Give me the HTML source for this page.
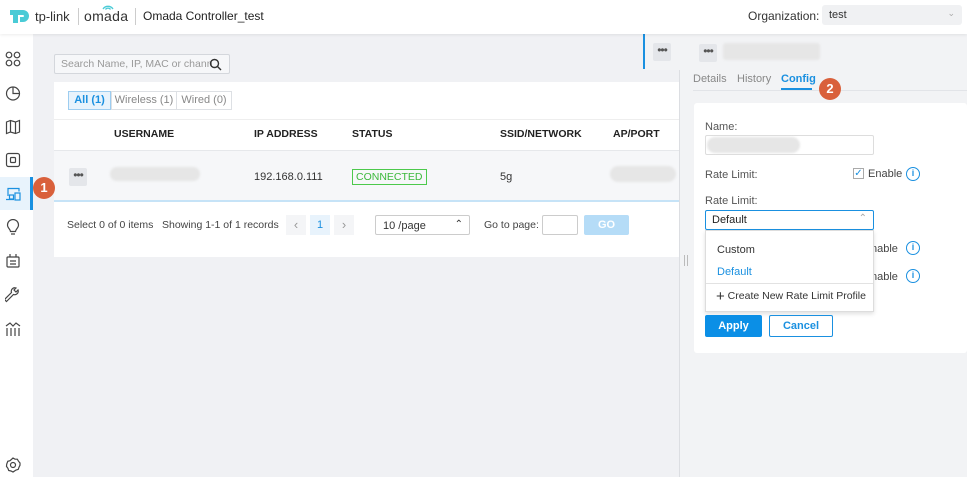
<!DOCTYPE html>
<html><head><meta charset="utf-8"><style>
*{box-sizing:border-box;margin:0;padding:0}
body{width:967px;height:477px;overflow:hidden;background:#f0f1f4;font-family:"Liberation Sans",Arial,sans-serif;font-size:11px;color:#333;position:relative}
.abs{position:absolute}
.hdr{left:0;top:0;width:967px;height:34px;background:#fff;box-shadow:0 1px 3px rgba(0,0,0,.08);z-index:5}
.side{left:0;top:34px;width:33px;height:443px;background:#fff}
.ic{position:absolute;left:5px;width:16px;height:16px}
.blur{background:#e6e6e6;border-radius:8px;filter:blur(1px)}
.th{font-weight:bold;font-size:10.5px;color:#222;top:128px}
.dots{width:18px;height:18px;background:#e4e6ea;border-radius:2px;color:#555;font-size:12px;text-align:center;line-height:14px;letter-spacing:-1px}
.badge{width:22px;height:22px;border-radius:50%;background:#d9603b;color:#fff;font-weight:bold;font-size:13px;text-align:center;line-height:22px}
.info{width:14px;height:14px;border:1.3px solid #1a90e0;border-radius:50%;color:#1a90e0;font-size:9px;text-align:center;line-height:11px;font-weight:bold}
</style></head><body>
<div class="abs hdr">
 <svg class="abs" style="left:7px;top:6px" width="26" height="22" viewBox="0 0 26 22"><path d="M3 4h8v13h-5v-8h-3z" fill="#4acbd6"/><path d="M10 4h6a6 6 0 0 1 0 12h-3v-5h3a1 1 0 0 0 0-2h-6z" fill="#4acbd6"/></svg>
 <div class="abs" style="left:35px;top:9px;font-size:13px;color:#333">tp-link</div>
 <div class="abs" style="left:78px;top:8px;width:1px;height:17px;background:#ccc"></div>
 <div class="abs" style="left:84px;top:8px;font-size:14px;color:#333;letter-spacing:.3px">omada</div>
 <svg class="abs" style="left:101px;top:3px" width="14" height="7" viewBox="0 0 14 7"><path d="M2 6a6 6 0 0 1 10 0M4.5 6.5a3 3 0 0 1 5 0" stroke="#4acbd6" stroke-width="1.3" fill="none"/></svg>
 <div class="abs" style="left:135px;top:8px;width:1px;height:17px;background:#ccc"></div>
 <div class="abs" style="left:143px;top:9px;font-size:12px;color:#222">Omada Controller_test</div>
 <div class="abs" style="left:748px;top:9px;font-size:12px;color:#333">Organization:</div>
 <div class="abs" style="left:822px;top:5px;width:140px;height:20px;background:#f0f1f3;border-radius:3px"><span class="abs" style="left:7px;top:4px;font-size:11px">test</span><span class="abs" style="right:7px;top:3px;color:#aaa;font-size:9px">&#8964;</span></div>
</div>
<div class="abs side">
 <div class="abs" style="left:0;top:143px;width:33px;height:33px;background:#e8f3fc"></div>
 <div class="abs" style="left:30px;top:143px;width:3px;height:33px;background:#1a90e0"></div>
 <svg class="ic" style="top:17px" viewBox="0 0 16 16" fill="none" stroke="#444" stroke-width="1.2"><circle cx="4" cy="4" r="2.8"/><circle cx="12" cy="4" r="2.8"/><circle cx="4" cy="12" r="2.8"/><circle cx="12" cy="12" r="2.8"/></svg>
 <svg class="ic" style="top:51px" viewBox="0 0 16 16" fill="none" stroke="#444" stroke-width="1.2"><circle cx="8" cy="8.5" r="6.5"/><path d="M8 2v6.5h6.5"/></svg>
 <svg class="ic" style="top:85px" viewBox="0 0 16 16" fill="none" stroke="#444" stroke-width="1.2"><path d="M1.5 3l4-1.5 5 1.5 4-1.5v11.5l-4 1.5-5-1.5-4 1.5zM5.5 1.5v11.5M10.5 3v11.5"/></svg>
 <svg class="ic" style="top:118px" viewBox="0 0 16 16" fill="none" stroke="#444" stroke-width="1.2"><rect x="1.5" y="1.5" width="13" height="13" rx="2"/><rect x="5.5" y="5.5" width="5" height="5" rx="1"/></svg>
 <svg class="ic" style="top:152px" viewBox="0 0 16 16" fill="none" stroke="#1a90e0" stroke-width="1.2"><path d="M3 10V2.5h11v3M1 13.5h8"/><rect x="10" y="7" width="5" height="7"/><rect x="4.5" y="9" width="4" height="4"/></svg>
 <svg class="ic" style="top:185px" viewBox="0 0 16 16" fill="none" stroke="#444" stroke-width="1.2"><path d="M5.5 12.5c0-2-3-3.5-3-6.5a5.5 5.5 0 0 1 11 0c0 3-3 4.5-3 6.5zM6 15h4"/></svg>
 <svg class="ic" style="top:219px" viewBox="0 0 16 16" fill="none" stroke="#444" stroke-width="1.2"><rect x="2" y="4" width="12" height="10" rx="1"/><path d="M5 4V1M11 4V1M5 8h6M5 11h6"/></svg>
 <svg class="ic" style="top:253px" viewBox="0 0 16 16" fill="none" stroke="#444" stroke-width="1.2"><path d="M1.5 14.5l7-7a3.5 3.5 0 0 0 4.5-4.5l-2 2-2-2 2-2a3.5 3.5 0 0 0-4.5 4.5l-7 7z"/></svg>
 <svg class="ic" style="top:287px" viewBox="0 0 16 16" fill="none" stroke="#444" stroke-width="1.2"><path d="M2 15V7M6 15V7M10 15V7M14 15V7M1 5l4-3 3 3 3-3 4 3"/></svg>
 <svg class="ic" style="top:423px" viewBox="0 0 16 16" fill="none" stroke="#444" stroke-width="1.2"><path d="M8 1l2 1.2h2.3l1.2 2 1.5 1.8v2.2l-1 2 -.8 2.2-2.2.6L8 15l-2-1-2.3-.5-.8-2.2-1.4-1.9.2-2.3L2.8 4.3l2.2-.6z"/><circle cx="8" cy="8" r="2.5"/></svg>
</div>
<div class="abs" style="left:54px;top:54px;width:176px;height:20px;border:1px solid #d4d7dc;background:#f6f7f9;border-radius:2px"><span class="abs" style="left:6px;top:3px;color:#999;font-size:10.5px;white-space:nowrap">Search Name, IP, MAC or chann</span><svg class="abs" style="left:154px;top:3px" width="13" height="13" viewBox="0 0 13 13" fill="none" stroke="#333" stroke-width="1.4"><circle cx="5.5" cy="5.5" r="4"/><path d="M8.5 8.5l3.5 3.5"/></svg></div>
<div class="abs" style="left:54px;top:82px;width:626px;height:175px;background:#fff">
 <div class="abs" style="left:14px;top:9px;width:43px;height:19px;border:1px solid #9dcdf0;background:#e8f3fc;color:#1a90e0;font-weight:bold;text-align:center;line-height:17px">All (1)</div>
 <div class="abs" style="left:57px;top:9px;width:66px;height:19px;border:1px solid #dde0e4;color:#888;text-align:center;line-height:17px">Wireless (1)</div>
 <div class="abs" style="left:122px;top:9px;width:56px;height:19px;border:1px solid #dde0e4;color:#888;text-align:center;line-height:17px">Wired (0)</div>
 <div class="abs" style="left:0;top:37px;width:626px;height:1px;background:#eee"></div>
 <div class="abs" style="left:0;top:68px;width:626px;height:52px;background:#f6f7f9;border-top:1px solid #e6e8eb;border-bottom:2px solid #c6e3f7"></div>
</div>
<div class="abs th" style="left:114px">USERNAME</div>
<div class="abs th" style="left:254px">IP ADDRESS</div>
<div class="abs th" style="left:352px">STATUS</div>
<div class="abs th" style="left:500px">SSID/NETWORK</div>
<div class="abs th" style="left:613px">AP/PORT</div>
<div class="abs dots" style="left:69px;top:168px">•••</div>
<div class="abs blur" style="left:110px;top:167px;width:90px;height:14px"></div>
<div class="abs" style="left:254px;top:171px">192.168.0.111</div>
<div class="abs" style="left:352px;top:169px;border:1px solid #4cc94c;color:#3bb83b;padding:1px 3px;font-size:10.5px">CONNECTED</div>
<div class="abs" style="left:500px;top:171px">5g</div>
<div class="abs blur" style="left:610px;top:166px;width:66px;height:16px"></div>
<div class="abs" style="left:67px;top:219px;color:#444;font-size:10.5px">Select 0 of 0 items</div>
<div class="abs" style="left:162px;top:219px;color:#444;font-size:10.5px">Showing 1-1 of 1 records</div>
<div class="abs" style="left:286px;top:215px;width:20px;height:20px;background:#f4f5f7;color:#999;text-align:center;line-height:19px;font-size:13px">&#8249;</div>
<div class="abs" style="left:310px;top:215px;width:20px;height:20px;background:#e8f3fc;color:#1a90e0;text-align:center;line-height:20px">1</div>
<div class="abs" style="left:334px;top:215px;width:20px;height:20px;background:#f4f5f7;color:#999;text-align:center;line-height:19px;font-size:13px">&#8250;</div>
<div class="abs" style="left:375px;top:215px;width:95px;height:20px;border:1px solid #ccc;border-radius:2px"><span class="abs" style="left:7px;top:4px">10 /page</span><span class="abs" style="right:6px;top:3px;font-size:10px">&#8963;</span></div>
<div class="abs" style="left:484px;top:219px;color:#444;font-size:10.5px">Go to page:</div>
<div class="abs" style="left:542px;top:215px;width:36px;height:20px;border:1px solid #ccc;border-radius:2px"></div>
<div class="abs" style="left:584px;top:215px;width:45px;height:20px;background:#b5dcf7;color:#fff;font-weight:bold;text-align:center;line-height:20px;border-radius:2px">GO</div>
<div class="abs" style="left:643px;top:34px;width:324px;height:36px;background:#f2f3f5"></div>
<div class="abs" style="left:643px;top:34px;width:2px;height:35px;background:#1a90e0"></div>
<div class="abs" style="left:679px;top:70px;width:288px;height:407px;background:#f2f3f5;border-left:1px solid #dcdee2"></div>
<div class="abs" style="left:684px;top:255px;width:4px;height:11px;border-left:1px solid #bbb;border-right:1px solid #bbb"></div>
<div class="abs dots" style="left:653px;top:43px">•••</div>
<div class="abs dots" style="left:699px;top:44px">•••</div>
<div class="abs blur" style="left:723px;top:43px;width:97px;height:17px;border-radius:3px"></div>
<div class="abs" style="left:693px;top:73px;color:#888">Details</div>
<div class="abs" style="left:737px;top:73px;color:#888">History</div>
<div class="abs" style="left:781px;top:73px;color:#1a90e0;font-weight:bold">Config</div>
<div class="abs" style="left:781px;top:88px;width:31px;height:2px;background:#1a90e0"></div>
<div class="abs" style="left:693px;top:90px;width:274px;height:1px;background:#e2e4e8"></div>
<div class="abs badge" style="left:819px;top:78px">2</div>
<div class="abs badge" style="left:33px;top:177px">1</div>
<div class="abs" style="left:694px;top:103px;width:273px;height:250px;background:#fff;border-radius:3px"></div>
<div class="abs" style="left:705px;top:121px;color:#555">Name:</div>
<div class="abs" style="left:705px;top:135px;width:169px;height:20px;border:1px solid #ddd;border-radius:2px"></div>
<div class="abs blur" style="left:707px;top:137px;width:93px;height:16px"></div>
<div class="abs" style="left:705px;top:169px;color:#555">Rate Limit:</div>
<div class="abs" style="left:853px;top:168px;width:11px;height:11px;border:1px solid #aaa;color:#1a90e0;font-size:10px;line-height:9px;text-align:center">&#10003;</div>
<div class="abs" style="left:868px;top:168px;color:#444">Enable</div>
<div class="abs info" style="left:906px;top:167px">i</div>
<div class="abs" style="left:705px;top:195px;color:#555">Rate Limit:</div>
<div class="abs" style="left:705px;top:210px;width:169px;height:20px;border:1px solid #1a90e0;border-radius:2px"><span class="abs" style="left:6px;top:3px;color:#222">Default</span><span class="abs" style="right:6px;top:2px;color:#aaa;font-size:10px">&#8963;</span></div>
<div class="abs" style="left:871px;top:243px;color:#444">nable</div>
<div class="abs info" style="left:906px;top:241px">i</div>
<div class="abs" style="left:871px;top:271px;color:#444">nable</div>
<div class="abs info" style="left:906px;top:269px">i</div>
<div class="abs" style="left:705px;top:230px;width:169px;height:82px;background:#fff;border:1px solid #ddd;box-shadow:0 2px 4px rgba(0,0,0,.12)">
 <div class="abs" style="left:11px;top:13px;color:#333">Custom</div>
 <div class="abs" style="left:11px;top:35px;color:#1a90e0">Default</div>
 <div class="abs" style="left:0;top:52px;width:167px;height:1px;background:#e2e2e2"></div>
 <div class="abs" style="left:10px;top:57px;color:#333;font-size:10.5px;white-space:nowrap"><span style="font-size:15px;vertical-align:-2px">+</span> Create New Rate Limit Profile</div>
</div>
<div class="abs" style="left:705px;top:315px;width:57px;height:22px;background:#0b8fe6;color:#fff;font-weight:bold;text-align:center;line-height:22px;border-radius:2px">Apply</div>
<div class="abs" style="left:769px;top:315px;width:64px;height:22px;border:1px solid #1a90e0;color:#1a90e0;font-weight:bold;text-align:center;line-height:20px;border-radius:2px">Cancel</div>
</body></html>
